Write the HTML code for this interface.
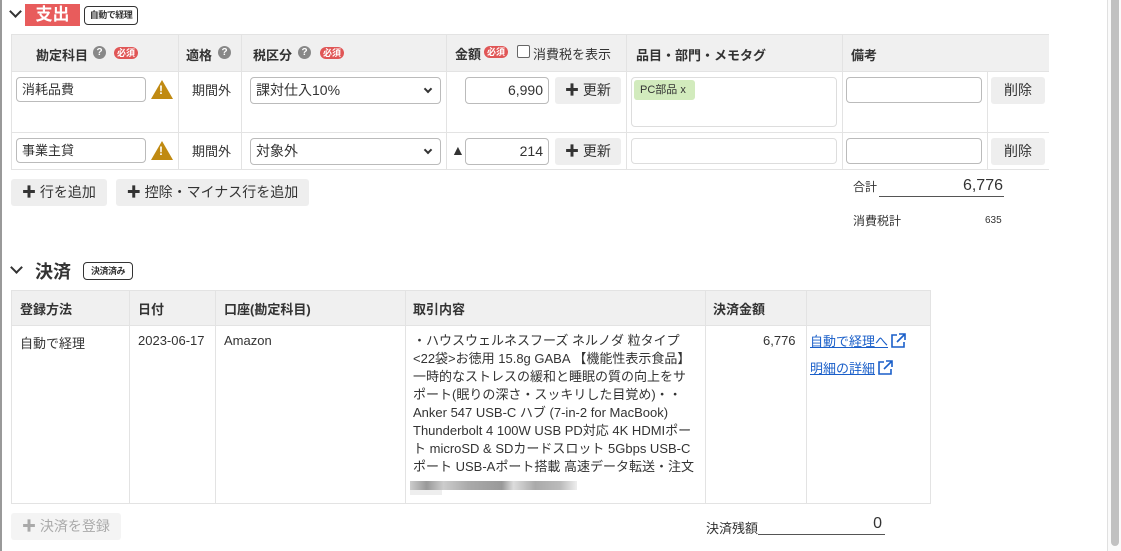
<!DOCTYPE html>
<html><head><meta charset="utf-8">
<style>
*{box-sizing:border-box;margin:0;padding:0}
body{width:1121px;height:551px;overflow:hidden;background:#fff;font-family:"Liberation Sans","Noto Sans CJK JP",sans-serif;font-size:13px;color:#333;position:relative}
.a{position:absolute;white-space:nowrap}
.chev{position:absolute;width:9px;height:9px;border-right:2.5px solid #333;border-bottom:2.5px solid #333;transform:rotate(45deg)}
.sc{position:absolute;right:9px;top:8px;width:6px;height:6px;border-right:2px solid #333;border-bottom:2px solid #333;transform:rotate(45deg)}
.tag{position:absolute;border:1px solid #333;border-radius:4px;font-size:9px;font-weight:bold;line-height:17px;text-align:center;color:#333;white-space:nowrap;letter-spacing:-0.5px}
.hd{position:absolute;background:#f0f0f0}
.b{font-weight:bold}
.q{position:absolute;width:13px;height:13px;border-radius:50%;background:#888;color:#fff;font-size:10px;font-weight:bold;text-align:center;line-height:13px}
.req{position:absolute;background:#e05656;color:#fff;font-size:9px;font-weight:bold;border-radius:7px;width:24px;height:12px;line-height:12px;text-align:center}
.inp{position:absolute;border:1px solid #bbb;border-radius:4px;background:#fff;height:25px;line-height:23px;padding:0 5px;white-space:nowrap}
.btn{position:absolute;background:#eee;border-radius:3px;text-align:center;line-height:26px;font-size:14px;color:#333;white-space:nowrap}
.vl{position:absolute;width:1px;background:#e3e3e3}
.hl{position:absolute;height:1px;background:#e3e3e3}
.warn{position:absolute;width:0;height:0;border-left:11px solid transparent;border-right:11px solid transparent;border-bottom:19px solid #c08a12}
.warn:after{content:"!";position:absolute;left:-3px;top:3px;color:#fff;font-size:12px;font-weight:bold}
a{color:#1a5fc9}
.h{font-size:13px;font-weight:bold}
</style></head><body>
<div class="a" style="left:0;top:0;width:2px;height:551px;background:#999"></div>
<div class="a" style="left:1107px;top:0;width:14px;height:551px;background:#fafafa;border-left:1px solid #e0e0e0"></div>
<div class="a" style="left:1111px;top:0;width:8px;height:546px;background:#c1c1c1;border-radius:0 0 4px 4px"></div>

<div class="chev" style="left:11px;top:7px"></div>
<div class="a" style="left:25px;top:4px;width:55px;height:22px;background:#e85c5c;color:#fff;font-size:17px;font-weight:bold;text-align:center;line-height:22px">支出</div>
<div class="tag" style="left:84px;top:6px;width:54px;height:19px">自動で経理</div>

<div class="hd" style="left:11px;top:34px;width:1038px;height:37px"></div>
<div class="hl" style="left:11px;top:34px;width:1038px"></div>
<div class="hl" style="left:11px;top:71px;width:1038px"></div>
<div class="hl" style="left:11px;top:132px;width:1038px"></div>
<div class="hl" style="left:11px;top:169px;width:1038px"></div>
<div class="vl" style="left:11px;top:34px;height:135px"></div>
<div class="vl" style="left:178px;top:34px;height:135px"></div>
<div class="vl" style="left:241px;top:34px;height:135px"></div>
<div class="vl" style="left:446px;top:34px;height:135px"></div>
<div class="vl" style="left:626px;top:34px;height:135px"></div>
<div class="vl" style="left:842px;top:34px;height:135px"></div>
<div class="vl" style="left:987px;top:71px;height:98px"></div>

<div class="a h" style="left:36px;top:45px">勘定科目</div>
<div class="q" style="left:93px;top:46px">?</div>
<div class="req" style="left:114px;top:47px">必須</div>
<div class="a h" style="left:186px;top:45px">適格</div>
<div class="q" style="left:218px;top:46px">?</div>
<div class="a h" style="left:253px;top:45px">税区分</div>
<div class="q" style="left:298px;top:46px">?</div>
<div class="req" style="left:320px;top:47px">必須</div>
<div class="a h" style="left:455px;top:44px">金額</div>
<div class="req" style="left:484px;top:46px">必須</div>
<div class="a" style="left:517px;top:45px;width:13px;height:13px;border:1px solid #666;border-radius:2px;background:#fff"></div>
<div class="a" style="left:533px;top:44px;font-size:13px">消費税を表示</div>
<div class="a h" style="left:636px;top:45px">品目・部門・メモタグ</div>
<div class="a h" style="left:851px;top:45px">備考</div>

<div class="inp" style="left:16px;top:77px;width:130px">消耗品費</div>
<div class="warn" style="left:151px;top:80px"></div>
<div class="a" style="left:192px;top:80px">期間外</div>
<div class="inp" style="left:250px;top:77px;width:191px;height:27px;line-height:25px;font-size:14px">課対仕入10%<span class="sc"></span></div>
<div class="inp" style="left:465px;top:77px;width:84px;height:27px;line-height:25px;text-align:right;font-size:14px">6,990</div>
<div class="btn" style="left:555px;top:77px;width:66px;height:27px"><b>✚</b> 更新</div>
<div class="inp" style="left:631px;top:77px;width:206px;height:50px;border-color:#ddd"></div>
<div class="a" style="left:634px;top:80px;width:61px;height:20px;background:#d2ebbd;border-radius:3px;font-size:11px;line-height:20px;padding-left:6px">PC部品 x</div>
<div class="inp" style="left:846px;top:77px;width:136px;height:26px"></div>
<div class="btn" style="left:991px;top:77px;width:54px;height:27px">削除</div>

<div class="inp" style="left:16px;top:138px;width:130px">事業主貸</div>
<div class="warn" style="left:151px;top:141px"></div>
<div class="a" style="left:192px;top:141px">期間外</div>
<div class="inp" style="left:250px;top:138px;width:191px;height:27px;line-height:25px;font-size:14px">対象外<span class="sc"></span></div>
<div class="a" style="left:451px;top:142px;font-size:14px">▲</div>
<div class="inp" style="left:465px;top:138px;width:84px;height:27px;line-height:25px;text-align:right;font-size:14px">214</div>
<div class="btn" style="left:555px;top:138px;width:66px;height:27px"><b>✚</b> 更新</div>
<div class="inp" style="left:631px;top:138px;width:206px;height:26px;border-color:#ddd"></div>
<div class="inp" style="left:846px;top:138px;width:136px;height:26px"></div>
<div class="btn" style="left:991px;top:138px;width:54px;height:27px">削除</div>

<div class="btn" style="left:11px;top:179px;width:96px;height:27px"><b>✚</b> 行を追加</div>
<div class="btn" style="left:116px;top:179px;width:193px;height:27px"><b>✚</b> 控除・マイナス行を追加</div>

<div class="a" style="left:853px;top:178px;font-size:12px">合計</div>
<div class="a" style="left:879px;top:196px;width:125px;height:1px;background:#555"></div>
<div class="a" style="left:940px;top:177px;width:63px;text-align:right;font-size:16px">6,776</div>
<div class="a" style="left:853px;top:212px;font-size:12px">消費税計</div>
<div class="a" style="left:985px;top:215px;font-size:10px">635</div>

<div class="chev" style="left:12px;top:263px"></div>
<div class="a b" style="left:35px;top:258px;font-size:18px">決済</div>
<div class="tag" style="left:83px;top:262px;width:50px;height:18px;line-height:16px">決済済み</div>

<div class="hd" style="left:11px;top:290px;width:920px;height:35px"></div>
<div class="hl" style="left:11px;top:290px;width:920px"></div>
<div class="hl" style="left:11px;top:325px;width:920px"></div>
<div class="hl" style="left:11px;top:503px;width:920px"></div>
<div class="vl" style="left:11px;top:290px;height:213px"></div>
<div class="vl" style="left:129px;top:290px;height:213px"></div>
<div class="vl" style="left:215px;top:290px;height:213px"></div>
<div class="vl" style="left:405px;top:290px;height:213px"></div>
<div class="vl" style="left:705px;top:290px;height:213px"></div>
<div class="vl" style="left:806px;top:290px;height:213px"></div>
<div class="vl" style="left:930px;top:290px;height:213px"></div>

<div class="a b" style="left:20px;top:299px">登録方法</div>
<div class="a b" style="left:138px;top:299px">日付</div>
<div class="a b" style="left:224px;top:299px">口座(勘定科目)</div>
<div class="a b" style="left:413px;top:299px">取引内容</div>
<div class="a b" style="left:713px;top:299px">決済金額</div>

<div class="a" style="left:20px;top:333px">自動で経理</div>
<div class="a" style="left:138px;top:333px">2023-06-17</div>
<div class="a" style="left:224px;top:333px">Amazon</div>
<div class="a" style="left:413px;top:332px;width:292px;line-height:18px">・ハウスウェルネスフーズ ネルノダ 粒タイプ<br>&lt;22袋&gt;お徳用 15.8g GABA 【機能性表示食品】<br>一時的なストレスの緩和と睡眠の質の向上をサ<br>ポート(眠りの深さ・スッキリした目覚め)・・<br>Anker 547 USB-C ハブ (7-in-2 for MacBook)<br>Thunderbolt 4 100W USB PD対応 4K HDMIポー<br>ト microSD &amp; SDカードスロット 5Gbps USB-C<br>ポート USB-Aポート搭載 高速データ転送・注文</div>
<div class="a" style="left:410px;top:481px;width:167px;height:9px;background:linear-gradient(90deg,#ccc,#999 10%,#ccc 20%,#aaa 35%,#999 55%,#ddd 62%,#aaa 75%,#bbb 90%,#eee)"></div>
<div class="a" style="left:410px;top:490px;width:32px;height:5px;background:#eee"></div>
<div class="a" style="left:763px;top:333px">6,776</div>
<div class="a" style="left:810px;top:331px"><a style="text-decoration:underline">自動で経理へ</a></div>
<svg class="a" style="left:890px;top:333px" width="16" height="16" viewBox="0 0 16 16" fill="none" stroke="#1a5fc9" stroke-width="1.6"><path d="M7 2H2v12h12V9"/><path d="M9 1h6v6M15 1L7 9"/></svg>
<div class="a" style="left:810px;top:358px"><a style="text-decoration:underline">明細の詳細</a></div>
<svg class="a" style="left:877px;top:360px" width="16" height="16" viewBox="0 0 16 16" fill="none" stroke="#1a5fc9" stroke-width="1.6"><path d="M7 2H2v12h12V9"/><path d="M9 1h6v6M15 1L7 9"/></svg>

<div class="btn" style="left:11px;top:513px;width:110px;height:27px;background:#f4f4f4;color:#aaa"><b>✚</b> 決済を登録</div>
<div class="a" style="left:706px;top:518px;font-size:13px">決済残額</div>
<div class="a" style="left:758px;top:534px;width:127px;height:1px;background:#555"></div>
<div class="a" style="left:860px;top:515px;width:22px;text-align:right;font-size:16px">0</div>
</body></html>
